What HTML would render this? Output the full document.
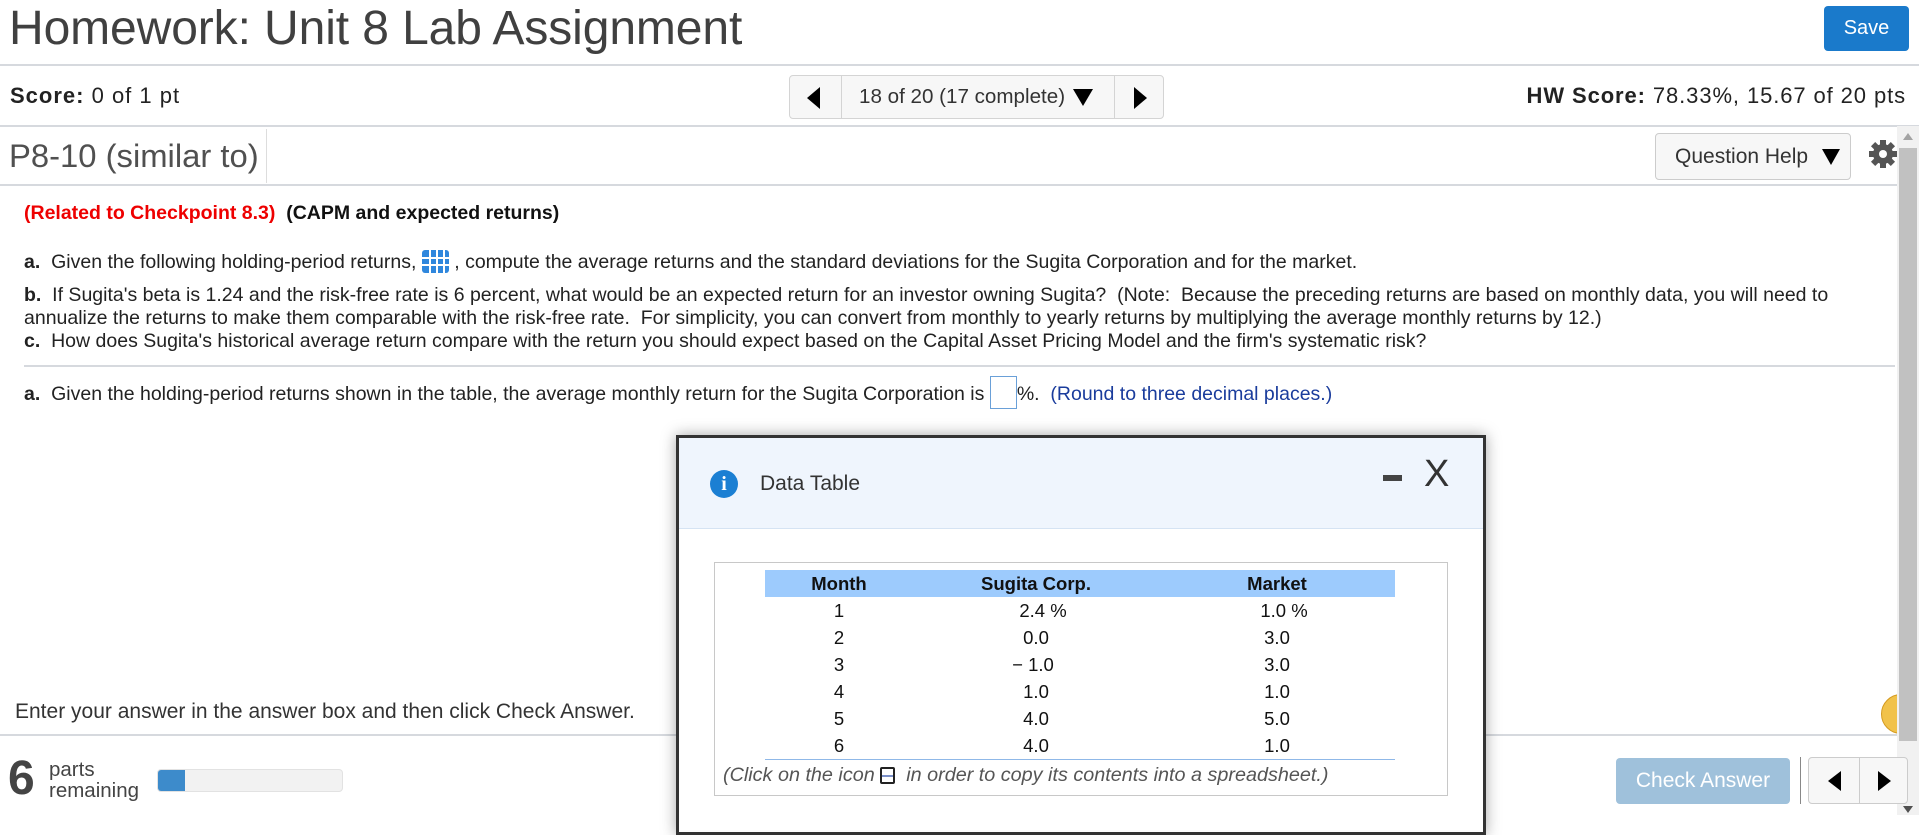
<!DOCTYPE html>
<html><head><meta charset="utf-8"><style>
*{box-sizing:border-box;margin:0;padding:0}
body{width:1919px;height:815px;overflow:hidden;background:#fff;font-family:"Liberation Sans",Arial,sans-serif;color:#222;position:relative}
.a{position:absolute;white-space:nowrap}
.hl{position:absolute;height:2px;background:#d6d9de}
</style></head><body>
<div class="a" style="left:9px;top:0px;font-size:48px;color:#404040;line-height:58px;letter-spacing:-0.1px">Homework: Unit 8 Lab Assignment</div>
<div class="a" style="left:1824px;top:6px;width:85px;height:45px;background:#1a7acb;border-radius:4px;color:#fff;font-size:20px;line-height:45px;text-align:center">Save</div>
<div class="hl" style="left:0;top:64px;width:1919px"></div>

<div class="a" style="left:10px;top:83px;font-size:22px;line-height:26px;color:#222;letter-spacing:1px"><b>Score:</b> 0 of 1 pt</div>
<div class="a" style="left:789px;top:75px;width:375px;height:44px;border:1px solid #d4d4d4;border-radius:4px;background:#f7f7f7"></div>
<div class="a" style="left:841px;top:75px;width:1px;height:44px;background:#d4d4d4"></div>
<div class="a" style="left:1114px;top:75px;width:1px;height:44px;background:#d4d4d4"></div>
<svg class="a" style="left:807px;top:87px" width="14" height="22"><path d="M13 0 L0 11 L13 22Z" fill="#000"/></svg>
<div class="a" style="left:859px;top:84px;font-size:20.6px;line-height:26px;color:#333">18 of 20 (17 complete)</div>
<svg class="a" style="left:1073px;top:89px" width="20" height="17"><path d="M0 0 H20 L10 17Z" fill="#000"/></svg>
<svg class="a" style="left:1134px;top:87px" width="14" height="22"><path d="M0 0 L13 11 L0 22Z" fill="#000"/></svg>
<div class="a" style="right:13px;top:83px;font-size:22px;line-height:26px;color:#222;letter-spacing:0.9px"><b>HW Score:</b> 78.33%, 15.67 of 20 pts</div>
<div class="hl" style="left:0;top:125px;width:1919px"></div>

<div class="a" style="left:9px;top:136px;font-size:32.8px;line-height:40px;color:#505050">P8-10 (similar to)</div>
<div class="a" style="left:266px;top:129px;width:1px;height:54px;background:#ddd"></div>
<div class="a" style="left:1655px;top:133px;width:196px;height:47px;border:1px solid #ccc;border-radius:4px;background:#f7f7f7"></div>
<div class="a" style="left:1675px;top:144px;font-size:21px;line-height:26px;color:#333">Question Help</div>
<svg class="a" style="left:1822px;top:149px" width="18" height="16"><path d="M0 0 H18 L9 16Z" fill="#000"/></svg>
<svg class="a" style="left:1868px;top:138px" width="30" height="32" viewBox="0 0 30 32"><g fill="#555"><circle cx="15" cy="16" r="10"/><rect x="12" y="2" width="6" height="28"/><rect x="1" y="13" width="28" height="6"/><rect x="12" y="2" width="6" height="28" transform="rotate(45 15 16)"/><rect x="12" y="2" width="6" height="28" transform="rotate(-45 15 16)"/></g><circle cx="15" cy="16" r="4" fill="#fff"/></svg>
<div class="a" style="left:1881px;top:694px;width:40px;height:40px;border-radius:50%;background:#f1c24a;border:1px solid #d49a20"></div>
<div class="a" style="left:1897px;top:126px;width:22px;height:689px;background:#f1f1f1"></div>
<div class="a" style="left:1899px;top:148px;width:18px;height:593px;background:#c1c1c1"></div>
<svg class="a" style="left:1903px;top:133px" width="10" height="7"><path d="M0 7 L5 0 L10 7Z" fill="#a3a3a3"/></svg>
<svg class="a" style="left:1903px;top:806px" width="10" height="7"><path d="M0 0 L5 7 L10 0Z" fill="#505050"/></svg>
<div class="hl" style="left:0;top:184px;width:1897px"></div>

<div class="a" style="left:24px;top:201px;font-size:19.5px;line-height:24px;font-weight:bold"><span style="color:#e00">(Related to Checkpoint 8.3)</span>&nbsp; <span style="color:#111">(CAPM and expected returns)</span></div>
<div class="a" style="left:24px;top:250px;font-size:19.5px;line-height:24px;color:#222"><b>a.</b>&nbsp; Given the following holding-period returns, <span style="display:inline-block;width:27px;height:23px;vertical-align:-5px;background:#2f87dd;border-radius:3px;position:relative;background-image:linear-gradient(90deg,transparent 7px,#fff 7px,#fff 9px,transparent 9px,transparent 14px,#fff 14px,#fff 16px,transparent 16px,transparent 21px,#fff 21px,#fff 23px,transparent 23px),linear-gradient(transparent 7px,#fff 7px,#fff 9px,transparent 9px,transparent 14px,#fff 14px,#fff 16px,transparent 16px)"></span> , compute the average returns and the standard deviations for the Sugita Corporation and for the market.</div>
<div class="a" style="left:24px;top:284px;font-size:19.5px;line-height:23px;color:#222"><b>b.</b>&nbsp; If Sugita's beta is 1.24 and the risk-free rate is 6 percent, what would be an expected return for an investor owning Sugita?&nbsp; (Note:&nbsp; Because the preceding returns are based on monthly data, you will need to<br>annualize the returns to make them comparable with the risk-free rate.&nbsp; For simplicity, you can convert from monthly to yearly returns by multiplying the average monthly returns by 12.)<br><b>c.</b>&nbsp; How does Sugita's historical average return compare with the return you should expect based on the Capital Asset Pricing Model and the firm's systematic risk?</div>
<div class="hl" style="left:24px;top:365px;width:1871px"></div>
<div class="a" style="left:24px;top:376px;font-size:19.5px;line-height:24px;color:#222"><b>a.</b>&nbsp; Given the holding-period returns shown in the table, the average monthly return for the Sugita Corporation is <span style="display:inline-block;width:27px;height:33px;border:1px solid #6aa0d8;vertical-align:-9px"></span>%.&nbsp; <span style="color:#1a3c9c">(Round to three decimal places.)</span></div>

<div class="a" style="left:15px;top:700px;font-size:21px;line-height:24px;color:#333">Enter your answer in the answer box and then click Check Answer.</div>
<div class="hl" style="left:0;top:734px;width:1897px"></div>
<div class="a" style="left:8px;top:752px;font-size:48px;font-weight:bold;line-height:54px;color:#444">6</div>
<div class="a" style="left:49px;top:759px;font-size:20.5px;line-height:21px;color:#444">parts<br>remaining</div>
<div class="a" style="left:157px;top:769px;width:186px;height:23px;background:#f2f2f2;border:1px solid #e2e2e2;border-radius:4px;overflow:hidden"><div style="width:27px;height:100%;background:#3d8bcb"></div></div>
<div class="a" style="left:1616px;top:758px;width:174px;height:46px;background:#9fc1db;border-radius:4px;color:#fff;font-size:21px;line-height:46px;text-align:center">Check Answer</div>
<div class="a" style="left:1800px;top:757px;width:1px;height:47px;background:#888"></div>
<div class="a" style="left:1808px;top:757px;width:100px;height:47px;background:#f7f7f7;border:1px solid #ccc;border-radius:4px"></div>
<div class="a" style="left:1859px;top:757px;width:1px;height:47px;background:#ccc"></div>
<svg class="a" style="left:1828px;top:771px" width="14" height="20"><path d="M13 0 L0 10 L13 20Z" fill="#000"/></svg>
<svg class="a" style="left:1878px;top:771px" width="14" height="20"><path d="M0 0 L13 10 L0 20Z" fill="#000"/></svg>

<div class="a" style="left:676px;top:435px;width:810px;height:400px;border:3px solid #333;background:#fff;box-shadow:0 0 14px rgba(0,0,0,.35)">
 <div style="position:absolute;left:0;top:0;width:804px;height:91px;background:#eff5fd;border-bottom:1px solid #d5e3f3"></div>
 <div style="position:absolute;left:31px;top:32px;width:28px;height:28px;border-radius:50%;background:#1b7fd3;color:#fff;font:bold 20px/28px 'Liberation Serif',serif;text-align:center">i</div>
 <div style="position:absolute;left:81px;top:34px;font-size:21px;line-height:24px;color:#333">Data Table</div>
 <div style="position:absolute;left:704px;top:37px;width:19px;height:6px;background:#444"></div>
 <div style="position:absolute;left:745px;top:16px;font-size:38px;line-height:40px;color:#333">X</div>
 <div style="position:absolute;left:35px;top:124px;width:734px;height:234px;border:1px solid #c8c8c8"></div>
 <div style="position:absolute;left:86px;top:132px;width:630px;height:27px;background:#9dcbfd"></div>
 <div style="position:absolute;left:86px;top:321px;width:630px;height:1px;background:#8fb8e8"></div>
 <div style="position:absolute;left:86px;top:132px;width:630px;font-size:18.5px;line-height:27px;color:#111">
  <div style="display:flex;font-weight:bold"><span style="width:148px;text-align:center">Month</span><span style="width:246px;text-align:center">Sugita Corp.</span><span style="width:236px;text-align:center">Market</span></div>
  <div style="display:flex"><span style="width:148px;text-align:center">1</span><span style="width:246px;text-align:center;padding-left:14px">2.4 %</span><span style="width:236px;text-align:center;padding-left:14px">1.0 %</span></div>
  <div style="display:flex"><span style="width:148px;text-align:center">2</span><span style="width:246px;text-align:center">0.0</span><span style="width:236px;text-align:center">3.0</span></div>
  <div style="display:flex"><span style="width:148px;text-align:center">3</span><span style="width:246px;text-align:center;padding-right:6px">&minus; 1.0</span><span style="width:236px;text-align:center">3.0</span></div>
  <div style="display:flex"><span style="width:148px;text-align:center">4</span><span style="width:246px;text-align:center">1.0</span><span style="width:236px;text-align:center">1.0</span></div>
  <div style="display:flex"><span style="width:148px;text-align:center">5</span><span style="width:246px;text-align:center">4.0</span><span style="width:236px;text-align:center">5.0</span></div>
  <div style="display:flex"><span style="width:148px;text-align:center">6</span><span style="width:246px;text-align:center">4.0</span><span style="width:236px;text-align:center">1.0</span></div>
 </div>
 <div style="position:absolute;left:44px;top:325px;font-size:19.8px;line-height:24px;color:#555;font-style:italic">(Click on the icon <span style="display:inline-block;width:15px;height:17px;border:2px solid #222;border-radius:2px;vertical-align:-3px;background:linear-gradient(#fff 6px,#7a8fc8 6px,#7a8fc8 8px,#fff 8px)"></span>&nbsp; in order to copy its contents into a spreadsheet.)</div>
</div>
</body></html>
